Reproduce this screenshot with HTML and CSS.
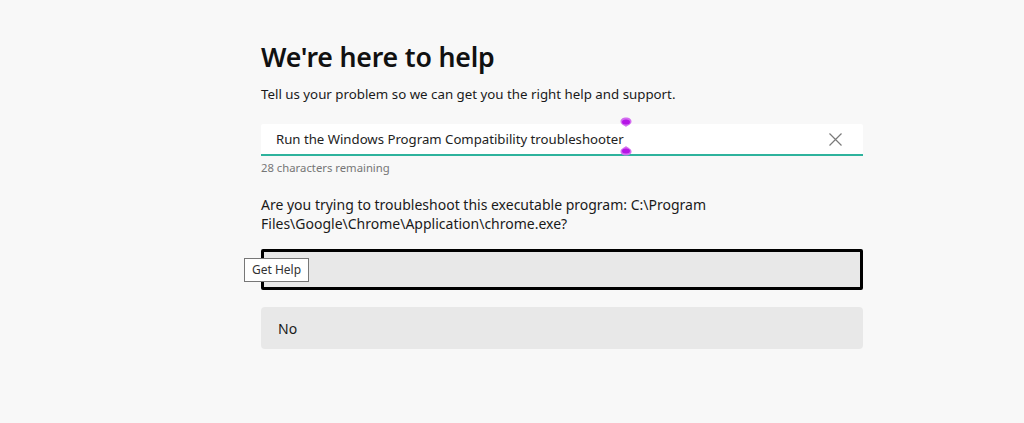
FILE: index.html
```html
<!DOCTYPE html>
<html>
<head>
<meta charset="utf-8">
<link rel="stylesheet" href="styles.css">
</head>
<body>
<main class="page">
  <h1 class="title">We're here to help</h1>
  <p class="lead">Tell us your problem so we can get you the right help and support.</p>
  <div class="field">
    <span class="field-text">Run the Windows Program Compatibility troubleshooter</span>
    <svg class="handle handle-top" width="12" height="10" viewBox="0 0 12 10"><path d="M6 10C4 8 0.5 7.5 0.5 4.5C0.5 2 3 0.5 6 0.5C9 0.5 11.5 2 11.5 4.5C11.5 7.5 8 8 6 10Z" fill="#d36cf0"/><ellipse cx="6" cy="5" rx="4" ry="2.5" fill="#b514e6"/></svg>
    <svg class="handle handle-bottom" width="12" height="10" viewBox="0 0 12 10"><path d="M6 0C4 2 0.5 2.5 0.5 5.5C0.5 8 3 9.5 6 9.5C9 9.5 11.5 8 11.5 5.5C11.5 2.5 8 2 6 0Z" fill="#d36cf0"/><ellipse cx="6" cy="5" rx="4" ry="2.5" fill="#b514e6"/></svg>
    <svg class="clear" width="13" height="13" viewBox="0 0 13 13"><path d="M0.5 0.5L12.5 12.5M12.5 0.5L0.5 12.5" stroke="#7a7a7a" stroke-width="1.2" fill="none"/></svg>
  </div>
  <div class="remaining">28 characters remaining</div>
  <p class="question">Are you trying to troubleshoot this executable program: C:\Program Files\Google\Chrome\Application\chrome.exe?</p>
  <div class="btn btn-focus">
    <span class="tip">Get Help</span>
  </div>
  <div class="btn">No</div>
</main>
</body>
</html>
```
FILE: styles.css
```css
html, body {
  margin: 0;
  padding: 0;
  background: #f8f8f8;
  font-family: "Noto Sans", "Open Sans", sans-serif;
  color: #1a1a1a;
}
.page {
  width: 602px;
  margin-left: 261px;
  padding-top: 37px;
}
.title {
  margin: 0;
  font-size: 26.7px;
  font-weight: 600;
  line-height: 40px;
  color: #111;
  letter-spacing: -0.2px;
}
.lead {
  margin: 7px 0 0;
  font-size: 13.3px;
  line-height: 20px;
}
.field {
  position: relative;
  margin-top: 20px;
  height: 30px;
  background: #fff;
  border-bottom: 2px solid #2eb39d;
  border-radius: 2px 2px 0 0;
  display: flex;
  align-items: center;
  padding: 0 21px 0 15px;
}
.field-text {
  flex: 1;
  font-size: 13.2px;
  color: #222;
}
.handle {
  position: absolute;
  left: 359px;
}
.handle-top { top: -7px; }
.handle-bottom { top: 22px; }
.clear { flex: none; }
.remaining {
  margin-top: 4px;
  font-size: 11.3px;
  line-height: 16px;
  color: #767676;
}
.question {
  margin: 19px 0 0;
  width: 460px;
  font-size: 14px;
  line-height: 19px;
}
.btn {
  position: relative;
  height: 42px;
  background: #e8e8e8;
  border-radius: 4px;
  display: flex;
  align-items: center;
  padding: 0 17px;
  font-size: 14px;
  box-sizing: border-box;
}
.btn-focus {
  margin-top: 16px;
  border: 3px solid #000;
  border-radius: 2px;
  height: 41px;
  margin-bottom: 17px;
}
.tip {
  position: absolute;
  left: -20px;
  top: 6px;
  padding: 2px 7px;
  height: 18px;
  line-height: 18px;
  background: #fff;
  border: 1px solid #777;
  font-size: 12px;
  color: #333;
}
```
